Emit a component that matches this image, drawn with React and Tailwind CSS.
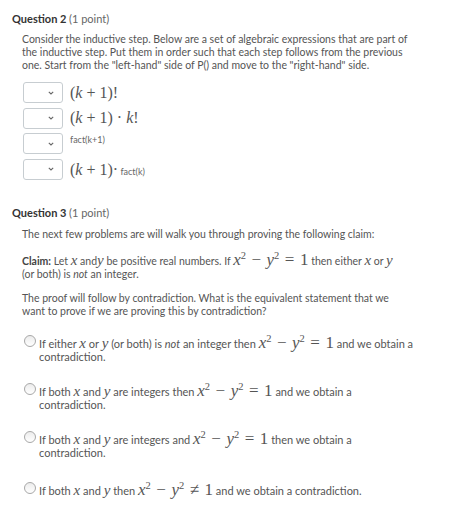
import React from 'react';

const V = ({ children }) => (
  <i className="font-['Liberation_Serif',serif] text-[15px] leading-[0]">{children}</i>
);

const Sq = () => <sup className="text-[10.5px] not-italic font-['Liberation_Serif',serif]">2</sup>;

const Eq = ({ neq }) => (
  <span className="font-['Liberation_Serif',serif] text-[17px] leading-[0] whitespace-nowrap">
    <i>x</i>
    <Sq />
    <span className="mx-[5.5px]">−</span>
    <i>y</i>
    <Sq />
    <span className="mx-[5.5px]">{neq ? '≠' : '='}</span>1
  </span>
);

const Select = () => (
  <div className="flex h-[21px] w-[40px] shrink-0 items-center justify-end rounded-[3px] border border-[#c7cdd1] bg-white pr-[8px]">
    <svg width="6" height="4" viewBox="0 0 6 4" fill="none">
      <path d="M0.8 0.8 L3 3 L5.2 0.8" stroke="#666" strokeWidth="1.1" />
    </svg>
  </div>
);

const Radio = () => (
  <span className="mt-[-2px] mr-[3px] h-[12px] w-[12px] shrink-0 rounded-full border border-[#a8a8a8] bg-gradient-to-b from-[#ececec] to-white" />
);

function Option({ children }) {
  return (
    <div className="flex items-start pl-[12px]">
      <Radio />
      <div className="w-[400px] text-[11px] leading-[13px]">{children}</div>
    </div>
  );
}

export default function App() {
  return (
    <div className="h-[521px] w-[474px] overflow-hidden bg-white px-[12px] pt-[12px] font-['Lato',sans-serif] text-[#555]">
      {/* question 2 */}
      <h2 className="text-[11px] font-bold leading-[14px] text-[#333]">
        Question 2 <span className="font-normal text-[#666]">(1 point)</span>
      </h2>
      <div className="mt-[7px] pl-[10px]">
        <p className="w-[394px] text-[10.5px] leading-[13px]">
          Consider the inductive step. Below are a set of algebraic expressions that are part of the inductive step. Put them in order such that each step follows from the previous one. Start from the "left-hand" side of P() and move to the "right-hand" side.
        </p>

        <div className="mt-[10px] flex flex-col gap-[4.5px] pl-[1px]">
          <div className="flex h-[21px] items-center gap-[7px]">
            <Select />
            <span className="font-['Liberation_Serif',serif] text-[16px] leading-none">
              (<i>k</i> + 1)!
            </span>
          </div>
          <div className="flex h-[21px] items-center gap-[7px]">
            <Select />
            <span className="font-['Liberation_Serif',serif] text-[16px] leading-none">
              (<i>k</i> + 1) · <i>k</i>!
            </span>
          </div>
          <div className="flex h-[21px] items-start gap-[7px]">
            <Select />
            <span className="text-[9px] leading-[14px] text-[#666]">fact(k+1)</span>
          </div>
          <div className="flex h-[21px] items-center gap-[7px]">
            <Select />
            <span className="leading-none">
              <span className="font-['Liberation_Serif',serif] text-[16px]">
                (<i>k</i> + 1)·
              </span>
              <span className="text-[9px] text-[#666]"> fact(k)</span>
            </span>
          </div>
        </div>
      </div>

      {/* question 3 */}
      <h2 className="mt-[26px] text-[11px] font-bold leading-[14px] text-[#333]">
        Question 3 <span className="font-normal text-[#666]">(1 point)</span>
      </h2>
      <div className="mt-[8px] pl-[10px] text-[10.5px] leading-[13px]">
        <p>The next few problems are will walk you through proving the following claim:</p>
        <p className="mt-[14px] w-[380px]">
          <b className="font-bold text-[#444]">Claim:</b> Let <V>x</V> and<V>y</V> be positive real numbers. If <Eq /> then either <V>x</V> or <V>y</V> (or both) is <em>not</em> an integer.
        </p>
        <p className="mt-[11px] w-[380px]">
          The proof will follow by contradiction. What is the equivalent statement that we want to prove if we are proving this by contradiction?
        </p>
      </div>

      <div className="mt-[19px] flex flex-col gap-[22px]">
        <Option>
          If either <V>x</V> or <V>y</V> (or both) is <em>not</em> an integer then <Eq /> and we obtain a
          <br />
          contradiction.
        </Option>
        <Option>
          If both <V>x</V> and <V>y</V> are integers then <Eq /> and we obtain a
          <br />
          contradiction.
        </Option>
        <Option>
          If both <V>x</V> and <V>y</V> are integers and <Eq /> then we obtain a
          <br />
          contradiction.
        </Option>
        <div className="pt-[3px]">
          <Option>
            If both <V>x</V> and <V>y</V> then <Eq neq /> and we obtain a contradiction.
          </Option>
        </div>
      </div>
    </div>
  );
}
